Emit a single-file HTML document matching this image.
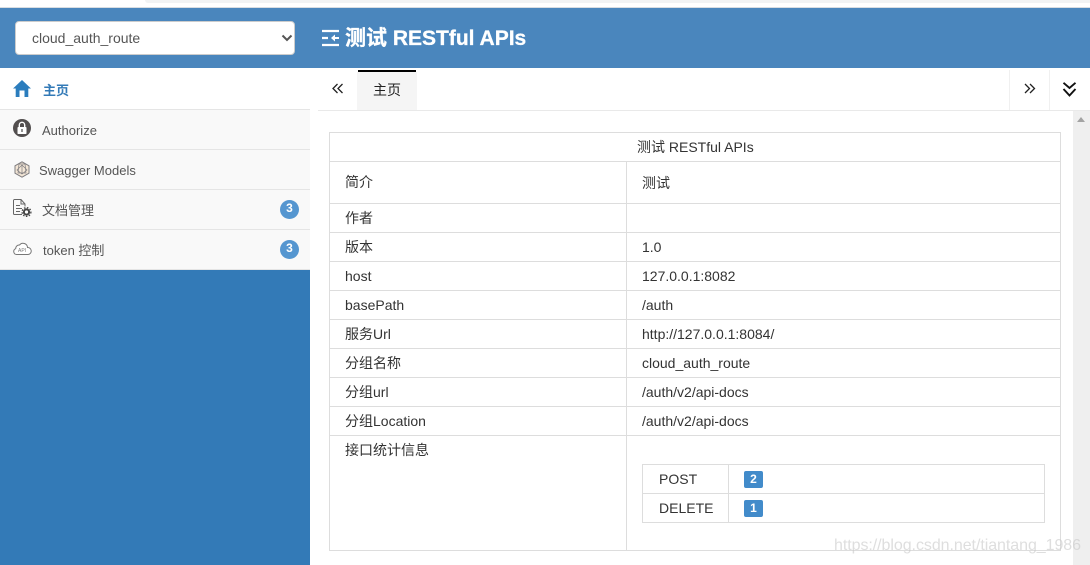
<!DOCTYPE html>
<html lang="zh"><head><meta charset="utf-8"><title>测试 RESTful APIs</title>
<style>
html,body{margin:0;padding:0;background:#fff}
body{width:1090px;height:565px;position:relative;overflow:hidden;font-family:"Liberation Sans","Noto Sans CJK SC",sans-serif;font-size:14px;color:#333}
.a{position:absolute;white-space:nowrap}
.t{position:absolute;white-space:nowrap;line-height:20px;height:20px}
.h{position:absolute;height:1px;background:#ddd}
.v{position:absolute;width:1px;background:#ddd}
.g{color:#555;font-size:13px}
</style></head><body>
<div class="a" style="left:145px;top:0;width:945px;height:3px;background:#f1f3f4;border-bottom-left-radius:8px"></div>
<div class="a" style="left:0;top:7px;width:1090px;height:1px;background:#d8dde2"></div>
<div class="a" style="left:0;top:8px;width:1090px;height:60px;background:#4a86bd"></div>
<div class="a" style="left:15px;top:21px;width:280px;height:34px;background:#fff;border-radius:4px;box-sizing:border-box;border:1px solid #ccc"></div>
<div class="t" style="left:32px;top:28px;color:#555">cloud_auth_route</div>
<svg class="a" style="left:281px;top:34px" width="12" height="8" viewBox="0 0 12 8"><path d="M1.500 1.500L6 6l4.500-4.500" fill="none" stroke="#555" stroke-width="2"/></svg>
<svg class="a" style="left:322px;top:29px" width="18" height="18" viewBox="0 0 18 18"><path d="M0 2h17M0 9h6M0 16h17" stroke="#fff" stroke-width="2.200" fill="none"/><path d="M17 9h-7" stroke="#fff" stroke-width="2" fill="none"/><path d="M13 5.500L9 9l4 3.500z" fill="#fff"/></svg>
<div class="t" style="left:345px;top:27px;height:24px;line-height:24px;font-size:21px;font-weight:bold;color:#fff;-webkit-text-stroke:.3px #fff">测试 RESTful APIs</div>

<div class="a" style="left:0;top:68px;width:310px;height:497px;background:#337ab7"></div>
<div class="a" style="left:0;top:68px;width:310px;height:41px;background:#fff"></div>
<div class="a" style="left:0;top:109px;width:310px;height:161px;background:#f9f9f9"></div>
<div class="h" style="left:0;top:109px;width:310px;background:#e5e5e5"></div>
<div class="h" style="left:0;top:149px;width:310px;background:#e5e5e5"></div>
<div class="h" style="left:0;top:189px;width:310px;background:#e5e5e5"></div>
<div class="h" style="left:0;top:229px;width:310px;background:#e5e5e5"></div>
<div class="h" style="left:0;top:269px;width:310px;background:#e5e5e5"></div>

<svg class="a" style="left:13px;top:80px" width="18" height="17" viewBox="0 0 18 17"><path d="M9 0L0 8.500h2.700V17h12.600V8.500H18z" fill="#2b7dbd"/><rect x="6.500" y="10.500" width="5" height="6.500" fill="#fff"/></svg>
<div class="t" style="left:43px;top:81px;color:#337ab7;font-size:13px;font-weight:bold">主页</div>

<svg class="a" style="left:13px;top:119px" width="18" height="18" viewBox="0 0 18 18"><circle cx="9" cy="9" r="9" fill="#534f4f"/><path d="M6.300 8.500V6a2.700 2.700 0 0 1 5.400 0v2.500" fill="none" stroke="#fff" stroke-width="1.400"/><rect x="4.500" y="8" width="9" height="7" rx=".8" fill="#fff"/><rect x="8.300" y="10" width="1.400" height="3" fill="#666"/></svg>
<div class="t g" style="left:42px;top:121px">Authorize</div>

<svg class="a" style="left:14px;top:161px" width="16" height="17" viewBox="0 0 16 17"><path d="M8 .8L15 4.800v7.400L8 16.200 1 12.200V4.800z" fill="#f3e6d6" stroke="#7f7d80"/><path d="M5 3l-1 9h8l-1-9zM3 9l5-5 5 5-5 4zM8 4v9" fill="none" stroke="#7f7d80" stroke-width=".7"/></svg>
<div class="t g" style="left:39px;top:161px">Swagger Models</div>

<svg class="a" style="left:13px;top:199px" width="19" height="18" viewBox="0 0 19 18"><path d="M9 15.500H1.500a1 1 0 0 1-1-1V1.500a1 1 0 0 1 1-1H8l4 4.500v2.500M8 .5V5h4M3 6.500h4M3 9.500h6M3 12.500h4" fill="none" stroke="#666" stroke-width="1"/><circle cx="13.500" cy="13" r="2.600" fill="#fff" stroke="#444" stroke-width="2"/><circle cx="13.500" cy="13" r="4.400" fill="none" stroke="#444" stroke-width="1.300" stroke-dasharray="1.500 1.500"/></svg>
<div class="t g" style="left:42px;top:201px">文档管理</div>

<svg class="a" style="left:13px;top:241px" width="19" height="15" viewBox="0 0 19 15"><path d="M4 13.500H3.500a3 3 0 0 1-.8-5.800A3.500 3.500 0 0 1 6.500 4a4.500 4.500 0 0 1 8 2.500A3.500 3.500 0 0 1 15 13.500z" fill="#fff" stroke="#777"/><text x="5" y="11" font-size="5" fill="#777" font-family="Liberation Sans">API</text></svg>
<div class="t g" style="left:43px;top:241px">token 控制</div>

<div class="a" style="left:280px;top:200px;width:19px;height:19px;border-radius:50%;background:#5596d0;color:#fff;font-size:12px;font-weight:bold;text-align:center;line-height:17px">3</div>
<div class="a" style="left:280px;top:240px;width:19px;height:19px;border-radius:50%;background:#5596d0;color:#fff;font-size:12px;font-weight:bold;text-align:center;line-height:17px">3</div>

<div class="h" style="left:318px;top:110px;width:772px;background:#e9e9e9"></div>
<svg class="a" style="left:332px;top:83px" width="12" height="11" viewBox="0 0 12 11"><path d="M5.500 1L1 5.500 5.500 10M10.500 1L6 5.500l4.500 4.500" fill="none" stroke="#222" stroke-width="1.300"/></svg>
<div class="a" style="left:357px;top:72px;width:60px;height:38px;background:#f5f5f5"></div>
<div class="a" style="left:358px;top:70px;width:58px;height:2px;background:#000"></div>
<div class="t" style="left:373px;top:80px;color:#222">主页</div>
<div class="v" style="left:1009px;top:70px;height:40px;background:#f0f0f0"></div>
<div class="v" style="left:1049px;top:70px;height:40px;background:#f0f0f0"></div>
<svg class="a" style="left:1024px;top:83px" width="12" height="11" viewBox="0 0 12 11"><path d="M1 1l4.500 4.500L1 10M6 1l4.500 4.500L6 10" fill="none" stroke="#222" stroke-width="1.300"/></svg>
<svg class="a" style="left:1062px;top:82px" width="15" height="15" viewBox="0 0 15 15"><path d="M1.500 .8l6 5.200 6-5.200M1.500 7l6 6.500 6-6.500" fill="none" stroke="#111" stroke-width="1.900"/></svg>

<div class="a" style="left:1073px;top:111px;width:17px;height:454px;background:#efefef"></div>
<div class="a" style="left:1077px;top:117px;width:0;height:0;border-left:4px solid transparent;border-right:4px solid transparent;border-bottom:5px solid #a3a3a3"></div>

<div class="a" style="left:329px;top:132px;width:732px;height:419px;box-sizing:border-box;border:1px solid #ddd"></div>
<div class="h" style="left:329px;top:161px;width:732px"></div>
<div class="h" style="left:329px;top:203px;width:732px"></div>
<div class="h" style="left:329px;top:232px;width:732px"></div>
<div class="h" style="left:329px;top:261px;width:732px"></div>
<div class="h" style="left:329px;top:290px;width:732px"></div>
<div class="h" style="left:329px;top:319px;width:732px"></div>
<div class="h" style="left:329px;top:348px;width:732px"></div>
<div class="h" style="left:329px;top:377px;width:732px"></div>
<div class="h" style="left:329px;top:406px;width:732px"></div>
<div class="h" style="left:329px;top:435px;width:732px"></div>
<div class="v" style="left:626px;top:161px;height:390px"></div>

<div class="t" style="left:637px;top:137px">测试 RESTful APIs</div>
<div class="t" style="left:345px;top:172px">简介</div><div class="t" style="left:642px;top:173px">测试</div>
<div class="t" style="left:345px;top:208px">作者</div>
<div class="t" style="left:345px;top:237px">版本</div><div class="t" style="left:642px;top:237px">1.0</div>
<div class="t" style="left:345px;top:266px">host</div><div class="t" style="left:642px;top:266px">127.0.0.1:8082</div>
<div class="t" style="left:345px;top:295px">basePath</div><div class="t" style="left:642px;top:295px">/auth</div>
<div class="t" style="left:345px;top:324px">服务Url</div><div class="t" style="left:642px;top:324px">http://127.0.0.1:8084/</div>
<div class="t" style="left:345px;top:353px">分组名称</div><div class="t" style="left:642px;top:353px">cloud_auth_route</div>
<div class="t" style="left:345px;top:382px">分组url</div><div class="t" style="left:642px;top:382px">/auth/v2/api-docs</div>
<div class="t" style="left:345px;top:411px">分组Location</div><div class="t" style="left:642px;top:411px">/auth/v2/api-docs</div>
<div class="t" style="left:345px;top:440px">接口统计信息</div>

<div class="a" style="left:642px;top:464px;width:403px;height:59px;box-sizing:border-box;border:1px solid #ddd"></div>
<div class="h" style="left:642px;top:493px;width:403px"></div>
<div class="v" style="left:728px;top:464px;height:59px"></div>
<div class="t" style="left:659px;top:469px">POST</div>
<div class="t" style="left:659px;top:498px">DELETE</div>
<div class="a" style="left:744px;top:471px;width:19px;height:17px;border-radius:2px;background:#428bca;color:#fff;font-size:12px;font-weight:bold;text-align:center;line-height:17px">2</div>
<div class="a" style="left:744px;top:500px;width:19px;height:17px;border-radius:2px;background:#428bca;color:#fff;font-size:12px;font-weight:bold;text-align:center;line-height:17px">1</div>

<div class="t" style="left:834px;top:536px;font-size:16px;letter-spacing:-.06px;color:rgba(200,200,200,.6)">https://blog.csdn.net/tiantang_1986</div>
</body></html>
